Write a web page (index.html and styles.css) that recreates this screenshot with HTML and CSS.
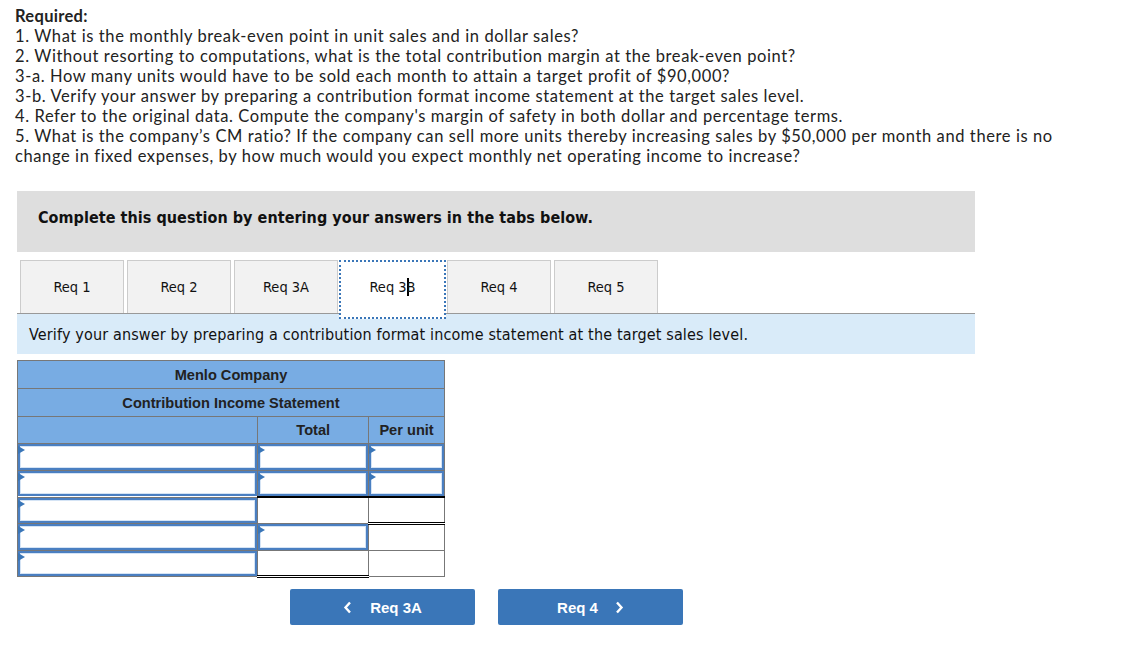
FILE: index.html
```html
<!DOCTYPE html>
<html>
<head>
<meta charset="utf-8">
<link rel="stylesheet" href="styles.css">
</head>
<body>
<div class="required">
  <div class="req-title">Required:</div>
  <div>1. What is the monthly break-even point in unit sales and in dollar sales?</div>
  <div>2. Without resorting to computations, what is the total contribution margin at the break-even point?</div>
  <div>3-a. How many units would have to be sold each month to attain a target profit of $90,000?</div>
  <div>3-b. Verify your answer by preparing a contribution format income statement at the target sales level.</div>
  <div>4. Refer to the original data. Compute the company's margin of safety in both dollar and percentage terms.</div>
  <div>5. What is the company’s CM ratio? If the company can sell more units thereby increasing sales by $50,000 per month and there is no change in fixed expenses, by how much would you expect monthly net operating income to increase?</div>
</div>

<div class="panel">
  <div class="instruct">Complete this question by entering your answers in the tabs below.</div>
  <div class="tabs">
    <div class="tab">Req 1</div>
    <div class="tab">Req 2</div>
    <div class="tab">Req 3A</div>
    <div class="tab active">Req 3<span class="caret"></span>B</div>
    <div class="tab">Req 4</div>
    <div class="tab">Req 5</div>
  </div>
  <div class="prompt">Verify your answer by preparing a contribution format income statement at the target sales level.</div>

  <table class="stmt">
    <tr class="hd"><td colspan="3">Menlo Company</td></tr>
    <tr class="hd"><td colspan="3">Contribution Income Statement</td></tr>
    <tr class="hd cols"><td class="c1"></td><td class="c2">Total</td><td class="c3">Per unit</td></tr>
    <tr>
      <td class="in"><div class="box"><i class="tri"></i></div></td>
      <td class="in"><div class="box"><i class="tri"></i></div></td>
      <td class="in"><div class="box"><i class="tri"></i></div></td>
    </tr>
    <tr>
      <td class="in"><div class="box"><i class="tri"></i></div></td>
      <td class="in"><div class="box"><i class="tri"></i></div></td>
      <td class="in"><div class="box"><i class="tri"></i></div></td>
    </tr>
    <tr>
      <td class="in"><div class="box"><i class="tri"></i></div></td>
      <td class="plain topline"></td>
      <td class="plain topline dbl"></td>
    </tr>
    <tr>
      <td class="in"><div class="box"><i class="tri"></i></div></td>
      <td class="in"><div class="box"><i class="tri"></i></div></td>
      <td class="plain"></td>
    </tr>
    <tr>
      <td class="in"><div class="box"><i class="tri"></i></div></td>
      <td class="plain dbl"></td>
      <td class="plain"></td>
    </tr>
  </table>

  <div class="nav">
    <button class="btn"><svg class="chev left" width="9" height="13" viewBox="0 0 9 13"><path d="M7 1.5 L2.5 6.5 L7 11.5" fill="none" stroke="#fff" stroke-width="2.4"/></svg>Req 3A</button>
    <button class="btn">Req 4<svg class="chev right" width="9" height="13" viewBox="0 0 9 13"><path d="M2 1.5 L6.5 6.5 L2 11.5" fill="none" stroke="#fff" stroke-width="2.4"/></svg></button>
  </div>
</div>
</body>
</html>
```
FILE: styles.css
```css
* { box-sizing: border-box; }
body {
  margin: 0;
  background: #fff;
  color: #222;
}
.required {
  padding: 6px 0 0 15px;
  width: 1080px;
  font-family: "Lato", "Open Sans", sans-serif;
  font-size: 16.5px;
  letter-spacing: 0.6px;
  line-height: 20px;
  color: #222;
}
.req-title { font-weight: bold; letter-spacing: 0.3px; }

.panel {
  margin: 25px 0 0 17px;
  width: 958px;
}
.instruct {
  background: #dedede;
  height: 61px;
  padding: 0 0 9px 21px;
  display: flex;
  align-items: center;
  font-family: "DejaVu Sans Condensed", "DejaVu Sans", sans-serif;
  font-weight: bold;
  font-size: 16px;
  letter-spacing: 0.05px;
  color: #111;
}
.tabs {
  margin-top: 8px;
  display: flex;
  gap: 3px;
  border-bottom: 1px solid #999;
  padding-left: 3px;
  height: 54px;
}
.tab {
  width: 104px;
  height: 53px;
  background: #f2f2f2;
  border: 1px solid #ccc;
  border-bottom: none;
  display: flex;
  align-items: center;
  justify-content: center;
  font-family: "DejaVu Sans Condensed", "DejaVu Sans", sans-serif;
  font-size: 14.5px;
  color: #111;
}
.tab.active {
  background: #fff;
  border: 2px dotted #3a76b8;
  height: 59px;
  width: 107px;
  margin: 0 -2px 0 -2px;
  padding-bottom: 5px;
  position: relative;
  z-index: 1;
}
.caret {
  display: inline-block;
  width: 2px;
  height: 18px;
  background: #000;
  vertical-align: middle;
  margin: 0 -2px 0 0;
}
.prompt {
  background: #d9ebf9;
  height: 40px;
  padding-left: 12px;
  display: flex;
  align-items: center;
  font-family: "DejaVu Sans Condensed", "DejaVu Sans", sans-serif;
  font-size: 16px;
  letter-spacing: 0.15px;
  color: #111;
}

.stmt {
  margin-top: 6px;
  border-collapse: collapse;
  width: 428px;
  font-family: "Liberation Sans", Arial, sans-serif;
  font-size: 14.6px;
  border: 1px solid #777;
}
.stmt td {
  border: 1px solid #777;
  padding: 0;
}
.stmt tr.hd td {
  background: #78ace3;
  height: 28px;
  text-align: center;
  font-weight: bold;
  color: #222;
}
.stmt tr.cols td { height: 27px; }
.stmt .c1 { width: 241px; }
.stmt .c2 { width: 111px; }
.stmt .c3 { width: 76px; }
.stmt td.in, .stmt td.plain { height: 25.5px; }
.box {
  position: relative;
  height: 25.5px;
  border: 2px solid #4a7fc1;
  box-shadow: inset 0 0 0 1px #d5e4f5;
  background: #fff;
}
.tri {
  position: absolute;
  left: -2px;
  top: 0;
  width: 0;
  height: 0;
  border-top: 4px solid transparent;
  border-bottom: 4px solid transparent;
  border-left: 7px solid #3a76b8;
}
.stmt td.topline { border-top: 2px solid #000; }
.stmt td.dbl { border-bottom: 3px double #000; }

.nav {
  margin-top: 11px;
  padding-left: 273px;
  display: flex;
  gap: 23px;
}
.btn {
  width: 185px;
  height: 36px;
  background: #3a76b8;
  border: none;
  border-radius: 2px;
  color: #fff;
  font-family: "Liberation Sans", Arial, sans-serif;
  font-weight: bold;
  font-size: 15px;
  display: flex;
  align-items: center;
  justify-content: center;
  padding: 0;
}
.chev.left { margin-right: 18px; }
.chev.right { margin-left: 17px; }
```
